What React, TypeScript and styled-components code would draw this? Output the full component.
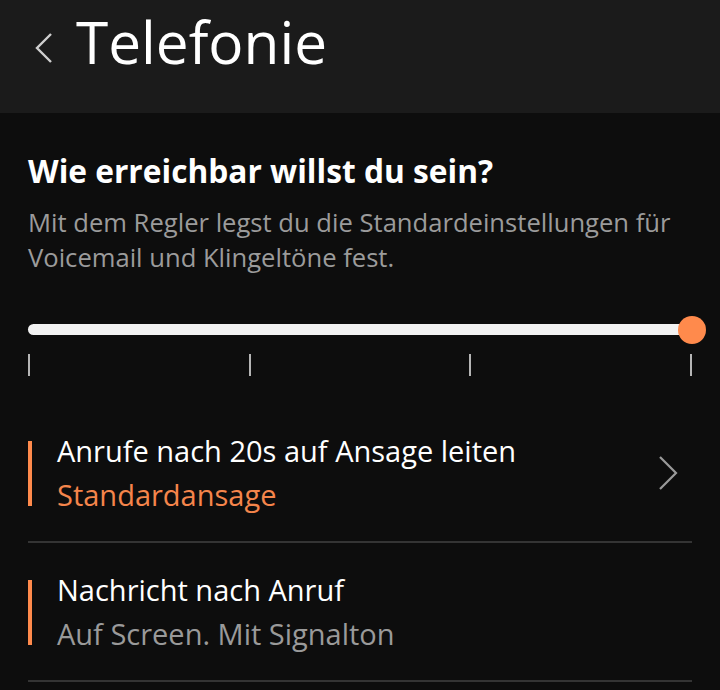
import React from "react";
import styled, { createGlobalStyle } from "styled-components";

const GlobalStyle = createGlobalStyle`
  html, body {
    margin: 0;
    padding: 0;
    background: #0d0d0d;
  }
  body {
    font-family: "Open Sans", "Noto Sans", sans-serif;
    color: #ffffff;
    -webkit-font-smoothing: antialiased;
  }
`;

const Screen = styled.div`
  width: 720px;
  min-height: 690px;
  background: #0d0d0d;
  overflow: hidden;
`;

const Header = styled.header`
  height: 113px;
  background: #1b1b1b;
  display: flex;
  align-items: center;
  padding: 0 0 32px 34px;
  box-sizing: border-box;
  gap: 22px;
`;

const BackButton = styled.button`
  background: none;
  border: none;
  padding: 0;
  margin-top: 14px;
  display: flex;
  align-items: center;
  cursor: pointer;
`;

const Title = styled.h1`
  margin: 0;
  font-size: 58.5px;
  font-weight: 400;
  color: #ffffff;
`;

const Content = styled.main`
  padding: 0 28px;
`;

const Intro = styled.section`
  padding-top: 38px;
`;

const Heading = styled.h2`
  margin: 0;
  font-size: 31.7px;
  font-weight: 700;
  line-height: 40px;
`;

const Description = styled.p`
  margin: 15px 0 0;
  font-size: 25.6px;
  line-height: 34.5px;
  color: #9b9b9b;
`;

const SliderWrap = styled.div`
  padding: 49px 0 28px;
`;

const Track = styled.div`
  position: relative;
  height: 11px;
  border-radius: 6px;
  background: #f2f2f2;
`;

const Thumb = styled.div`
  position: absolute;
  top: 50%;
  width: 28px;
  height: 28px;
  border-radius: 50%;
  background: #ff8a4c;
  transform: translate(-50%, -50%);
`;

const Ticks = styled.div`
  display: flex;
  justify-content: space-between;
  margin-top: 19px;
`;

const Tick = styled.span`
  width: 2px;
  height: 22px;
  background: #b5b5b5;
`;

const List = styled.ul`
  list-style: none;
  margin: 0;
  padding: 0;
`;

const Item = styled.li`
  display: flex;
  align-items: center;
  padding: 25px 0 24px;
  border-bottom: 2px solid #343434;
`;

const Accent = styled.span`
  flex: none;
  width: 4px;
  height: 65px;
  background: #ff8a4c;
`;

const ItemText = styled.div`
  flex: 1;
  padding-left: 25px;
  line-height: 44px;
  font-size: 29px;
`;

const ItemTitle = styled.div`
  color: #ffffff;
`;

const ItemValue = styled.div<{ $accent?: boolean }>`
  color: ${(p) => (p.$accent ? "#f5854b" : "#9a9a9a")};
`;

const Chevron = styled.svg`
  flex: none;
  margin-right: 14px;
`;

const settings = [
  { title: "Anrufe nach 20s auf Ansage leiten", value: "Standardansage", accent: true, link: true },
  { title: "Nachricht nach Anruf", value: "Auf Screen. Mit Signalton", accent: false, link: false },
];

const App = () => {
  const level = 3;
  const steps = 3;

  return (
    <Screen>
      <GlobalStyle />
      <Header>
        <BackButton aria-label="Zurück">
          <svg width="20" height="32" viewBox="0 0 20 32">
            <path d="M17 2 L3 16 L17 30" fill="none" stroke="#cfcfcf" strokeWidth="2.4" />
          </svg>
        </BackButton>
        <Title>Telefonie</Title>
      </Header>
      <Content>
        <Intro>
          <Heading>Wie erreichbar willst du sein?</Heading>
          <Description>
            Mit dem Regler legst du die Standardeinstellungen für Voicemail und Klingeltöne fest.
          </Description>
        </Intro>
        <SliderWrap>
          <Track>
            <Thumb style={{ left: `${(level / steps) * 100}%` }} />
          </Track>
          <Ticks>
            {Array.from({ length: steps + 1 }).map((_, i) => (
              <Tick key={i} />
            ))}
          </Ticks>
        </SliderWrap>
        <List>
          {settings.map((s) => (
            <Item key={s.title}>
              <Accent />
              <ItemText>
                <ItemTitle>{s.title}</ItemTitle>
                <ItemValue $accent={s.accent}>{s.value}</ItemValue>
              </ItemText>
              {s.link && (
                <Chevron width="20" height="34" viewBox="0 0 20 34">
                  <path d="M2 1 L18 17 L2 33" fill="none" stroke="#9a9a9a" strokeWidth="2.2" />
                </Chevron>
              )}
            </Item>
          ))}
        </List>
      </Content>
    </Screen>
  );
};

export default App;
